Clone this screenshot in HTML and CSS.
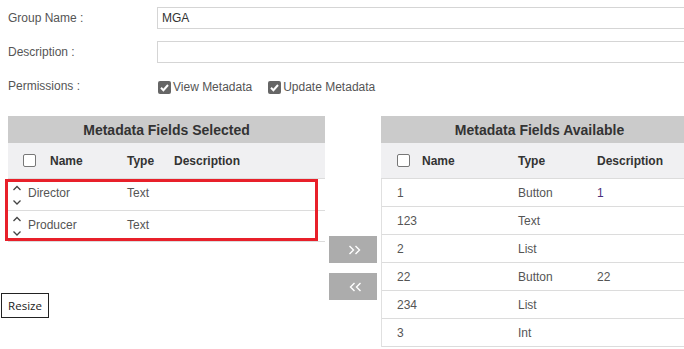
FILE: index.html
```html
<!DOCTYPE html>
<html>
<head>
<meta charset="utf-8">
<link rel="stylesheet" href="styles.css">
</head>
<body>
<div class="page">
  <div class="form">
    <div class="form-row">
      <label class="form-label">Group Name :</label>
      <div class="input">MGA</div>
    </div>
    <div class="form-row">
      <label class="form-label">Description :</label>
      <div class="input"></div>
    </div>
    <div class="form-row">
      <label class="form-label">Permissions :</label>
      <div class="perms">
        <span class="perm"><span class="cb-checked"><svg width="13" height="13" viewBox="0 0 13 13"><path d="M3 6.8 L5.4 9.2 L10 4" fill="none" stroke="#fff" stroke-width="2"/></svg></span>View Metadata</span>
        <span class="perm"><span class="cb-checked"><svg width="13" height="13" viewBox="0 0 13 13"><path d="M3 6.8 L5.4 9.2 L10 4" fill="none" stroke="#fff" stroke-width="2"/></svg></span>Update Metadata</span>
      </div>
    </div>
  </div>

  <div class="transfer">
    <div class="panel-left">
      <div class="panel">
        <div class="panel-title">Metadata Fields Selected</div>
        <div class="sub-head sub-left">
          <span class="cb"></span>
          <span class="lc-name">Name</span>
          <span class="lc-type">Type</span>
          <span>Description</span>
        </div>
        <div class="sel-rows">
          <div class="sel-row">
            <svg class="chev" width="10" height="22" viewBox="0 0 10 22"><path d="M1.5 6 L5 2.5 L8.5 6 M1.5 16.5 L5 20 L8.5 16.5" fill="none" stroke="#444" stroke-width="1.3"/></svg>
            <span class="lr-name">Director</span>
            <span>Text</span>
          </div>
          <div class="sel-row">
            <svg class="chev" width="10" height="22" viewBox="0 0 10 22"><path d="M1.5 6 L5 2.5 L8.5 6 M1.5 16.5 L5 20 L8.5 16.5" fill="none" stroke="#444" stroke-width="1.3"/></svg>
            <span class="lr-name">Producer</span>
            <span>Text</span>
          </div>
          <div class="highlight"></div>
        </div>
      </div>
      <button class="resize">Resize</button>
    </div>

    <div class="moves">
      <button class="move" aria-label="Add"><svg width="14" height="10" viewBox="0 0 14 10"><path d="M1.5 1 L5.5 5 L1.5 9 M7.5 1 L11.5 5 L7.5 9" fill="none" stroke="#fff" stroke-width="1.4"/></svg></button>
      <button class="move" aria-label="Remove"><svg width="14" height="10" viewBox="0 0 14 10"><path d="M6.5 1 L2.5 5 L6.5 9 M12.5 1 L8.5 5 L12.5 9" fill="none" stroke="#fff" stroke-width="1.4"/></svg></button>
    </div>

    <div class="panel panel-right">
      <div class="panel-title">Metadata Fields Available</div>
      <div class="sub-head sub-right">
        <span class="cb"></span>
        <span class="rc-name">Name</span>
        <span class="rc-type">Type</span>
        <span>Description</span>
      </div>
      <div class="avail-rows">
        <div class="av-row"><span class="rr-name">1</span><span class="rr-type">Button</span><span class="desc-link">1</span></div>
        <div class="av-row"><span class="rr-name">123</span><span class="rr-type">Text</span><span></span></div>
        <div class="av-row"><span class="rr-name">2</span><span class="rr-type">List</span><span></span></div>
        <div class="av-row"><span class="rr-name">22</span><span class="rr-type">Button</span><span>22</span></div>
        <div class="av-row"><span class="rr-name">234</span><span class="rr-type">List</span><span></span></div>
        <div class="av-row"><span class="rr-name">3</span><span class="rr-type">Int</span><span></span></div>
      </div>
    </div>
  </div>
</div>
</body>
</html>
```

FILE: styles.css
```css
html, body {
  margin: 0;
  padding: 0;
  overflow: hidden;
  background: #fff;
}
body {
  font-family: "Liberation Sans", Arial, sans-serif;
  font-size: 12px;
  color: #555;
  width: 684px;
  height: 349px;
}
.page {
  padding: 7px 0 0 8px;
  width: 900px;
}
.form {
  display: flex;
  flex-direction: column;
  gap: 12px;
}
.form-row {
  display: flex;
  align-items: center;
  height: 22px;
}
.form-label {
  width: 149px;
  flex: none;
  color: #555;
}
.input {
  box-sizing: border-box;
  width: 600px;
  height: 22px;
  border: 1px solid #d5d5d5;
  padding: 0 4px;
  line-height: 20px;
  color: #333;
  font-size: 12px;
}
.perms {
  display: flex;
  gap: 16px;
  padding-left: 1px;
  margin-top: 2px;
}
.perm {
  display: flex;
  align-items: center;
  color: #555;
}
.cb-checked {
  width: 13px;
  height: 13px;
  border-radius: 2px;
  background: #666;
  display: inline-flex;
  margin-right: 2px;
}
.transfer {
  display: flex;
  margin-top: 19px;
  align-items: flex-start;
}
.panel-left {
  width: 317px;
  flex: none;
}
.panel {
  width: 317px;
  flex: none;
}
.panel-title {
  height: 27px;
  background: #cbcbcb;
  color: #333;
  font-weight: bold;
  font-size: 14px;
  text-align: center;
  line-height: 28px;
}
.sub-head {
  background: #f0f0f2;
  border-bottom: 1px solid #dcdcdc;
  display: flex;
  align-items: center;
  font-weight: bold;
  color: #333;
  box-sizing: border-box;
  height: 36px;
}
.cb {
  width: 13px;
  height: 13px;
  box-sizing: border-box;
  border: 1.5px solid #777;
  border-radius: 2px;
  background: #fff;
  flex: none;
}
.sub-left { padding-left: 15px; }
.sub-left .cb { margin-right: 14px; }
.lc-name { width: 77px; }
.lc-type { width: 47px; }

.sel-rows {
  position: relative;
}
.sel-row {
  height: 31px;
  box-sizing: border-box;
  border-bottom: 1px solid #dcdcdc;
  display: flex;
  align-items: center;
  padding: 0 0 3px 4px;
  color: #555;
}
.sel-row:first-child { height: 32px; }
.chev {
  flex: none;
  margin-right: 6px;
  margin-top: 3px;
}
.lr-name { width: 99px; }
.highlight {
  position: absolute;
  left: -3px;
  top: 0;
  width: 313px;
  height: 62px;
  box-sizing: border-box;
  border: 3px solid #e8202a;
}
.resize {
  margin: 51px 0 0 -7px;
  width: 48px;
  height: 25px;
  padding: 0;
  border: 1px solid #222;
  background: #fff;
  color: #222;
  font-family: "Open Sans", sans-serif;
  font-size: 11.5px;
  display: block;
}
.moves {
  width: 48px;
  flex: none;
  margin: 120px 4px 0 4px;
  display: flex;
  flex-direction: column;
  gap: 10px;
}
.move {
  width: 48px;
  height: 27px;
  background: #acacac;
  border: none;
  padding: 0;
  display: flex;
  align-items: center;
  justify-content: center;
}
.move svg { margin-left: 3px; }
.sub-right { padding-left: 16px; }
.sub-right .cb { margin-right: 12px; }
.rc-name { width: 96px; }
.rc-type { width: 79px; }
.avail-rows {
  border-left: 1px solid #e0e0e0;
}
.av-row {
  height: 28px;
  box-sizing: border-box;
  border-bottom: 1px solid #dcdcdc;
  display: flex;
  align-items: center;
  padding-left: 15px;
  color: #555;
}
.rr-name { width: 121px; }
.rr-type { width: 79px; }
.desc-link { color: #4a2f7a; }
```
